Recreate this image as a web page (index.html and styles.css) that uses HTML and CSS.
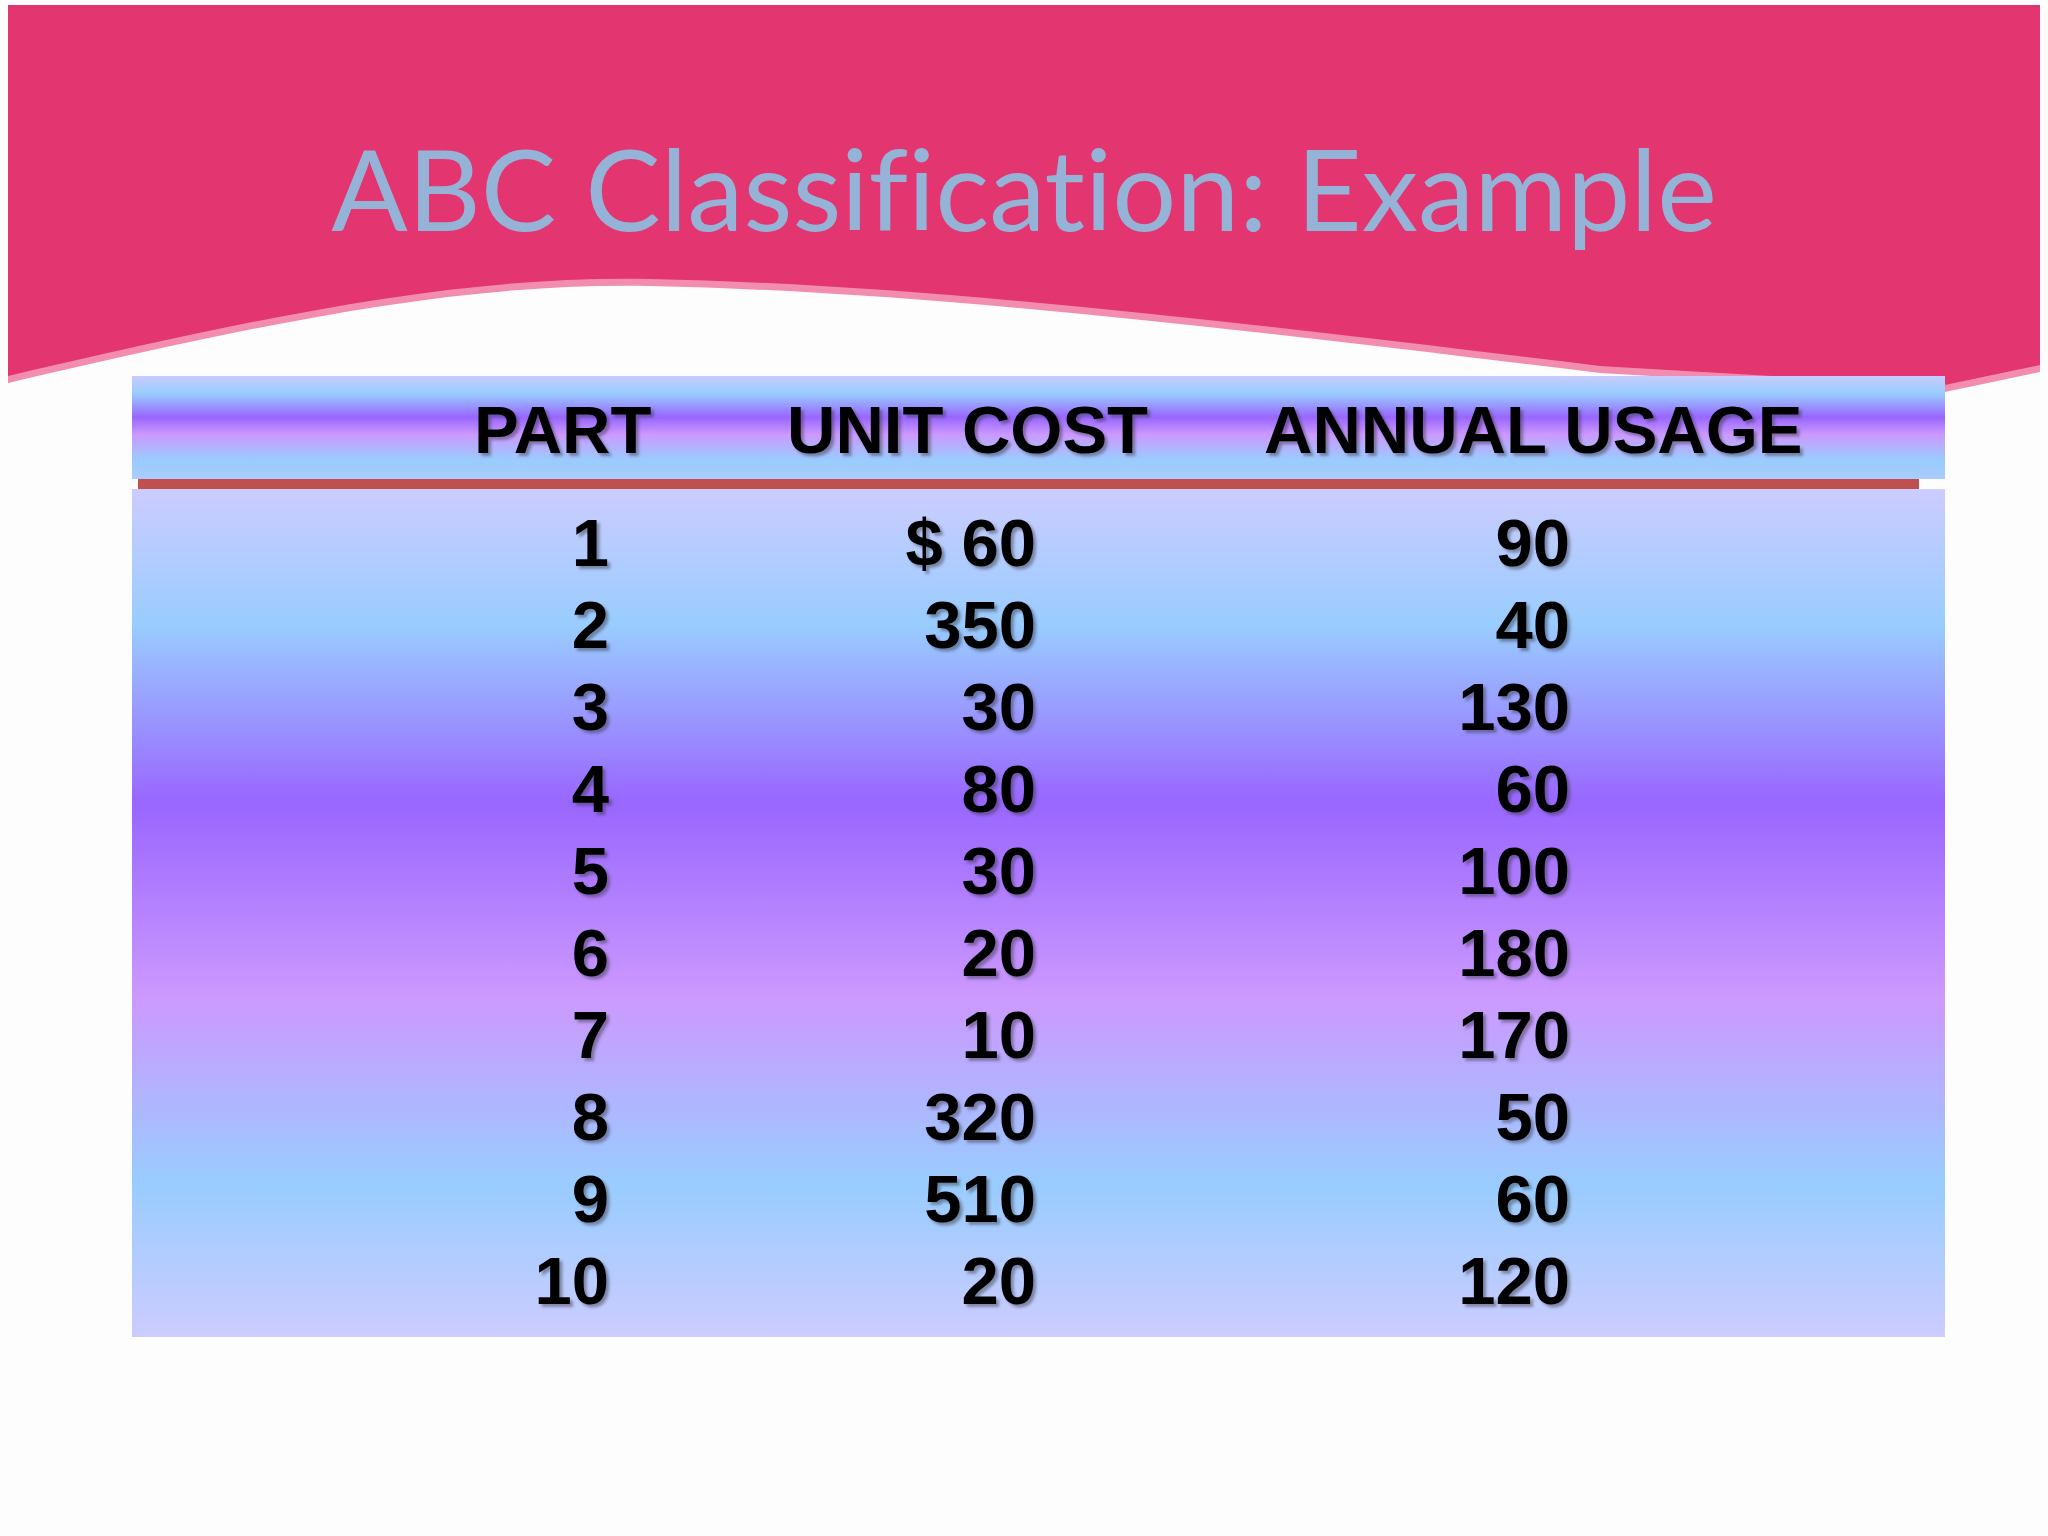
FILE: index.html
```html
<!DOCTYPE html>
<html lang="en">
<head>
<meta charset="utf-8">
<title>ABC Classification: Example</title>
<link rel="stylesheet" href="styles.css">
</head>
<body>
<div class="slide">
  <svg class="banner" width="2048" height="400" viewBox="0 0 2048 400" aria-hidden="true">
    <path class="banner-edge" d="M8,5 H2040 V372 L1940,393 L1600,373 C1300,337 950,292 650,286 C450,282 250,327 8,383 Z"/>
    <path class="banner-fill" d="M8,5 H2040 V365 L1940,386 L1600,366 C1300,330 950,285 650,279 C450,275 250,320 8,376 Z"/>
  </svg>
  <h1 class="title">ABC Classification: Example</h1>
  <div class="table">
    <div class="thead">
      <div class="th">PART</div>
      <div class="th">UNIT COST</div>
      <div class="th">ANNUAL USAGE</div>
    </div>
    <div class="rule"></div>
    <div class="tbody">
      <div>1</div><div>$ 60</div><div>90</div>
      <div>2</div><div>350</div><div>40</div>
      <div>3</div><div>30</div><div>130</div>
      <div>4</div><div>80</div><div>60</div>
      <div>5</div><div>30</div><div>100</div>
      <div>6</div><div>20</div><div>180</div>
      <div>7</div><div>10</div><div>170</div>
      <div>8</div><div>320</div><div>50</div>
      <div>9</div><div>510</div><div>60</div>
      <div>10</div><div>20</div><div>120</div>
    </div>
  </div>
</div>
</body>
</html>
```

FILE: styles.css
```css
html, body {
  margin: 0;
  padding: 0;
  background: #fdfdfe;
}

.slide {
  position: relative;
  width: 2048px;
  height: 1536px;
  overflow: hidden;
  background: #fdfdfe;
}

.banner {
  position: absolute;
  left: 0;
  top: 0;
}

.banner-edge {
  fill: #f28db0;
}

.banner-fill {
  fill: #e33570;
}

.title {
  position: relative;
  margin: 0;
  padding-top: 120px;
  font-family: Lato, "Open Sans", sans-serif;
  font-weight: 400;
  font-size: 113px;
  line-height: 134px;
  text-align: center;
  color: #95b3d7;
  font-variant-ligatures: none;
  font-feature-settings: "liga" 0, "clig" 0;
}

.table {
  position: relative;
  margin: 122px 0 0 132px;
  width: 1813px;
  font-family: "Liberation Sans", Arial, sans-serif;
  font-weight: 700;
  font-size: 67px;
  color: #000;
  text-shadow: 3px 3px 3px rgba(50, 50, 60, 0.45);
}

.thead {
  display: grid;
  grid-template-columns: 313px 477px auto;
  padding: 4px 0 0 342px;
  height: 99px;
  line-height: 99px;
  background: linear-gradient(to bottom,
    #c8ccff 0%,
    #99ccff 17%,
    #9966ff 40%,
    #cc99ff 57%,
    #99ccff 82%,
    #aaccff 100%);
}

.th {
  white-space: nowrap;
}

.rule {
  height: 10px;
  margin: 0 26px 0 6px;
  background: #c0504d;
}

.tbody {
  display: grid;
  grid-template-columns: 477px 427px 534px;
  grid-auto-rows: 82px;
  line-height: 82px;
  padding: 13px 0 15px;
  text-align: right;
  background: linear-gradient(to bottom,
    #ccccff 0%,
    #99ccff 16%,
    #9966ff 37%,
    #cc99ff 60%,
    #99ccff 82%,
    #ccccff 100%);
}
```
